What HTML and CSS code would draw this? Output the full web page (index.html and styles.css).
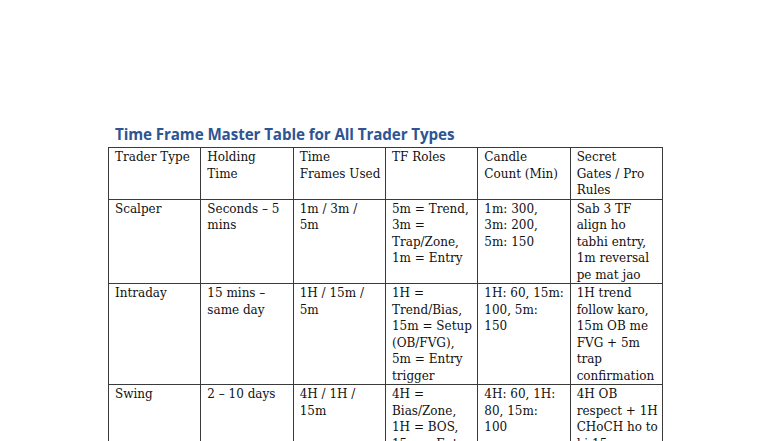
FILE: index.html
```html
<!DOCTYPE html>
<html lang="en">
<head>
<meta charset="utf-8">
<title>Time Frame Master Table</title>
<link rel="stylesheet" href="styles.css">
</head>
<body>
<main class="page">
  <h1 class="title">Time Frame Master Table for All Trader Types</h1>
  <table class="master">
    <thead>
      <tr>
        <th>Trader Type</th>
        <th>Holding<br>Time</th>
        <th>Time<br>Frames Used</th>
        <th>TF Roles</th>
        <th>Candle<br>Count (Min)</th>
        <th>Secret<br>Gates / Pro<br>Rules</th>
      </tr>
    </thead>
    <tbody>
      <tr>
        <td>Scalper</td>
        <td>Seconds – 5<br>mins</td>
        <td>1m / 3m /<br>5m</td>
        <td>5m = Trend,<br>3m =<br>Trap/Zone,<br>1m = Entry</td>
        <td>1m: 300,<br>3m: 200,<br>5m: 150</td>
        <td>Sab 3 TF<br>align ho<br>tabhi entry,<br>1m reversal<br>pe mat jao</td>
      </tr>
      <tr>
        <td>Intraday</td>
        <td>15 mins –<br>same day</td>
        <td>1H / 15m /<br>5m</td>
        <td>1H =<br>Trend/Bias,<br>15m = Setup<br>(OB/FVG),<br>5m = Entry<br>trigger</td>
        <td>1H: 60, 15m:<br>100, 5m:<br>150</td>
        <td>1H trend<br>follow karo,<br>15m OB me<br>FVG + 5m<br>trap<br>confirmation</td>
      </tr>
      <tr>
        <td>Swing</td>
        <td>2 – 10 days</td>
        <td>4H / 1H /<br>15m</td>
        <td>4H =<br>Bias/Zone,<br>1H = BOS,<br>15m = Entry</td>
        <td>4H: 60, 1H:<br>80, 15m:<br>100</td>
        <td>4H OB<br>respect + 1H<br>CHoCH ho to<br>hi 15m<br>entry</td>
      </tr>
    </tbody>
  </table>
</main>
</body>
</html>
```

FILE: styles.css
```css
html, body {
  margin: 0;
  padding: 0;
  background: #ffffff;
}

.page {
  padding: 124px 0 0 108px;
}

.title {
  margin: 0 0 3px 7px;
  font-family: "Open Sans", "Liberation Sans", sans-serif;
  font-weight: 700;
  font-size: 15.2px;
  line-height: 20px;
  color: #2e5593;
  letter-spacing: -0.1px;
}

.master {
  border-collapse: collapse;
  table-layout: fixed;
  width: 555px;
  font-family: "DejaVu Serif", "Liberation Serif", serif;
  font-size: 12px;
  line-height: 16.5px;
  color: #111111;
}

.master th,
.master td {
  border: 1px solid #3a3a3a;
  padding: 1px 2px 0 6px;
  text-align: left;
  vertical-align: top;
  font-weight: 400;
  white-space: nowrap;
}
```
